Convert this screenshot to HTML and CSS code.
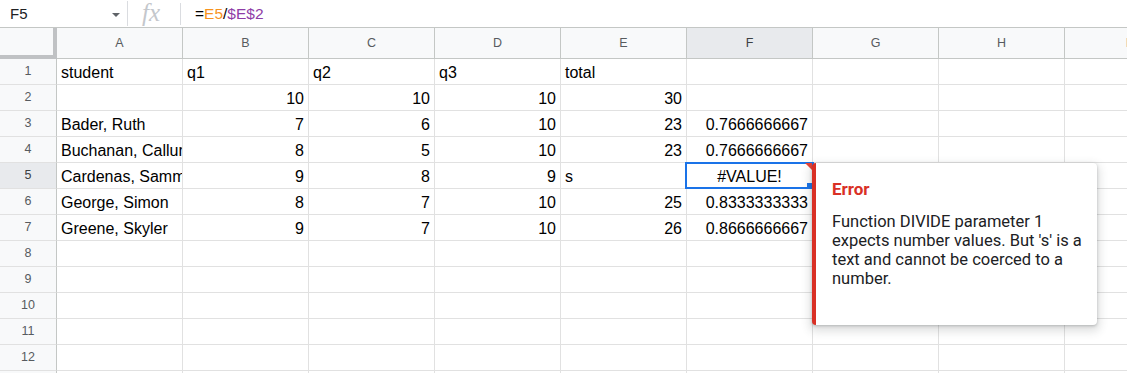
FILE: index.html
```html
<!DOCTYPE html>
<html lang="en">
<head>
  <meta charset="utf-8" />
  <title>Grades - Sheet1</title>
  <link rel="stylesheet" href="styles.css">
</head>
<body>
  <div class="formula-bar">
    <div class="name-box">
      <span class="name-ref">F5</span>
      <span class="caret"></span>
    </div>
    <div class="fx">fx</div>
    <div class="formula">=<span class="ref1">E5</span>/<span class="ref2">$E$2</span></div>
  </div>

  <div class="sheet-wrap">
    <div class="sheet">
      <div class="corner"></div>
      <div class="ch">A</div><div class="ch">B</div><div class="ch">C</div><div class="ch">D</div><div class="ch">E</div>
      <div class="ch active">F</div><div class="ch">G</div><div class="ch">H</div><div class="ch">I</div>

      <div class="rh">1</div>
      <div class="cell">student</div><div class="cell">q1</div><div class="cell">q2</div><div class="cell">q3</div><div class="cell">total</div>
      <div class="cell"></div><div class="cell"></div><div class="cell"></div><div class="cell"></div>

      <div class="rh">2</div>
      <div class="cell"></div><div class="cell num">10</div><div class="cell num">10</div><div class="cell num">10</div><div class="cell num">30</div>
      <div class="cell"></div><div class="cell"></div><div class="cell"></div><div class="cell"></div>

      <div class="rh">3</div>
      <div class="cell">Bader, Ruth</div><div class="cell num">7</div><div class="cell num">6</div><div class="cell num">10</div><div class="cell num">23</div>
      <div class="cell num">0.7666666667</div><div class="cell"></div><div class="cell"></div><div class="cell"></div>

      <div class="rh">4</div>
      <div class="cell">Buchanan, Callum</div><div class="cell num">8</div><div class="cell num">5</div><div class="cell num">10</div><div class="cell num">23</div>
      <div class="cell num">0.7666666667</div><div class="cell"></div><div class="cell"></div><div class="cell"></div>

      <div class="rh active">5</div>
      <div class="cell">Cardenas, Sammy</div><div class="cell num">9</div><div class="cell num">8</div><div class="cell num">9</div><div class="cell">s</div>
      <div class="cell ctr">#VALUE!</div><div class="cell"></div><div class="cell"></div><div class="cell"></div>

      <div class="rh">6</div>
      <div class="cell">George, Simon</div><div class="cell num">8</div><div class="cell num">7</div><div class="cell num">10</div><div class="cell num">25</div>
      <div class="cell num">0.8333333333</div><div class="cell"></div><div class="cell"></div><div class="cell"></div>

      <div class="rh">7</div>
      <div class="cell">Greene, Skyler</div><div class="cell num">9</div><div class="cell num">7</div><div class="cell num">10</div><div class="cell num">26</div>
      <div class="cell num">0.8666666667</div><div class="cell"></div><div class="cell"></div><div class="cell"></div>

      <div class="rh">8</div>
      <div class="cell"></div><div class="cell"></div><div class="cell"></div><div class="cell"></div><div class="cell"></div>
      <div class="cell"></div><div class="cell"></div><div class="cell"></div><div class="cell"></div>

      <div class="rh">9</div>
      <div class="cell"></div><div class="cell"></div><div class="cell"></div><div class="cell"></div><div class="cell"></div>
      <div class="cell"></div><div class="cell"></div><div class="cell"></div><div class="cell"></div>

      <div class="rh">10</div>
      <div class="cell"></div><div class="cell"></div><div class="cell"></div><div class="cell"></div><div class="cell"></div>
      <div class="cell"></div><div class="cell"></div><div class="cell"></div><div class="cell"></div>

      <div class="rh">11</div>
      <div class="cell"></div><div class="cell"></div><div class="cell"></div><div class="cell"></div><div class="cell"></div>
      <div class="cell"></div><div class="cell"></div><div class="cell"></div><div class="cell"></div>

      <div class="rh">12</div>
      <div class="cell"></div><div class="cell"></div><div class="cell"></div><div class="cell"></div><div class="cell"></div>
      <div class="cell"></div><div class="cell"></div><div class="cell"></div><div class="cell"></div>

      <div class="rh">13</div>
      <div class="cell"></div><div class="cell"></div><div class="cell"></div><div class="cell"></div><div class="cell"></div>
      <div class="cell"></div><div class="cell"></div><div class="cell"></div><div class="cell"></div>
    </div>

    <!-- overlays on the active cell F5 -->
    <div class="selection"></div>
    <div class="err-flag"></div>
    <div class="fill-handle"></div>

    <div class="err-tip">
      <div class="err-title">Error</div>
      <p class="err-msg">Function DIVIDE parameter 1 expects number values. But 's' is a text and cannot be coerced to a number.</p>
    </div>
  </div>
</body>
</html>
```

FILE: styles.css
```css
body {
  margin: 0;
  font-family: 'Liberation Sans', Arial, sans-serif;
  background-color: #ffffff;
  color: #000000;
  width: 1127px;
  height: 373px;
  overflow: hidden;
}

/* formula bar */
.formula-bar {
  display: flex;
  align-items: center;
  height: 28px;
  box-sizing: border-box;
  border-bottom: 1px solid #c4c7c5;
}
.name-box {
  display: flex;
  align-items: center;
  justify-content: space-between;
  width: 128px;
  height: 25px;
  box-sizing: border-box;
  padding: 0 7px 0 10px;
  border-right: 1px solid #dadce0;
}
.name-ref {
  font-size: 15px;
  color: #202124;
}
.caret {
  width: 0;
  height: 0;
  border-left: 4.5px solid transparent;
  border-right: 4.5px solid transparent;
  border-top: 4.5px solid #5f6368;
  margin-top: 2px;
}
.fx {
  width: 53px;
  height: 22px;
  box-sizing: border-box;
  border-right: 1px solid #dadce0;
  padding-left: 14px;
  font-family: 'Liberation Serif', serif;
  font-style: italic;
  font-size: 25px;
  line-height: 20px;
  color: #c4c7cc;
}
.formula {
  padding-left: 14px;
  font-size: 15.5px;
  color: #000000;
}
.ref1 {
  color: #f7931e;
}
.ref2 {
  color: #8e3ca6;
}

/* grid */
.sheet-wrap {
  position: relative;
  overflow: hidden;
  height: 345px;
}
.sheet {
  display: grid;
  grid-template-columns: 57px repeat(9, 126px);
  grid-template-rows: 31px repeat(13, 26px);
}
.corner {
  background-color: #f8f9fa;
  border-right: 4px solid #c0c2c4;
  border-bottom: 4px solid #c0c2c4;
  box-sizing: border-box;
}
.ch, .rh {
  background-color: #f8f9fa;
  color: #575b5f;
  font-size: 12.5px;
  text-align: center;
  box-sizing: border-box;
}
.ch {
  line-height: 30px;
  border-right: 1px solid #c4c7c5;
  border-bottom: 1px solid #c4c7c5;
}
.rh {
  line-height: 25px;
  border-right: 1px solid #c4c7c5;
  border-bottom: 1px solid #e1e1e1;
}
.ch.active, .rh.active {
  background-color: #e8eaed;
  color: #3c4043;
}
.cell {
  font-size: 16px;
  line-height: 23px;
  padding: 2px 4px 0;
  border-right: 1px solid #e1e1e1;
  border-bottom: 1px solid #e1e1e1;
  box-sizing: border-box;
  white-space: nowrap;
  overflow: hidden;
}
.num {
  text-align: right;
}
.ctr {
  text-align: center;
}

/* active cell overlays */
.selection {
  position: absolute;
  left: 685px;
  top: 134px;
  width: 129px;
  height: 27px;
  box-sizing: border-box;
  border: 2px solid #1a73e8;
}
.err-flag {
  position: absolute;
  left: 805px;
  top: 135px;
  width: 0;
  height: 0;
  border-top: 7px solid #e94235;
  border-left: 7px solid transparent;
}
.fill-handle {
  position: absolute;
  left: 807px;
  top: 155px;
  width: 6px;
  height: 6px;
  background-color: #1a73e8;
}

/* error tooltip */
.err-tip {
  position: absolute;
  left: 812px;
  top: 135px;
  width: 285px;
  height: 162px;
  box-sizing: border-box;
  padding: 16px 8px 0 16px;
  background-color: #ffffff;
  border-left: 4px solid #d93025;
  border-radius: 4px;
  box-shadow: 0 1px 3px rgba(60, 64, 67, 0.3), 0 4px 8px 3px rgba(60, 64, 67, 0.15);
  font-family: Roboto, 'Liberation Sans', sans-serif;
}
.err-title {
  color: #d93025;
  font-weight: 700;
  font-size: 17px;
  line-height: 20px;
}
.err-msg {
  margin: 13px 0 0;
  color: #202124;
  font-size: 16.5px;
  line-height: 19px;
}
```
